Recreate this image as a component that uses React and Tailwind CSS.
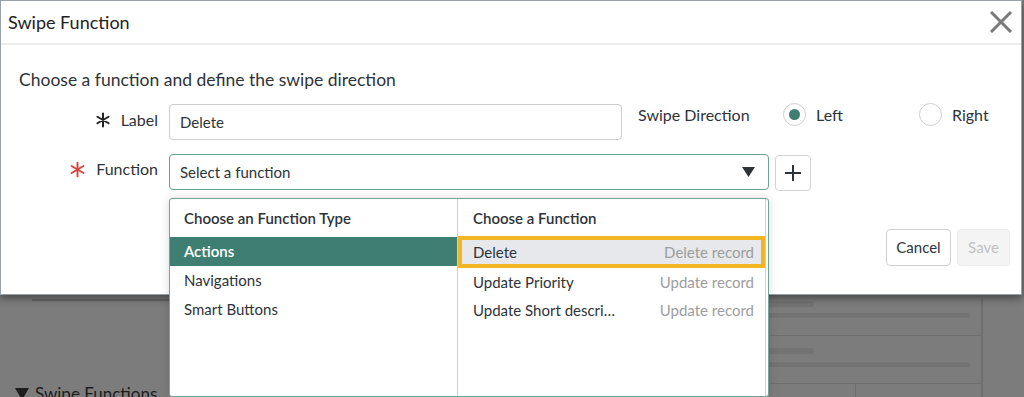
// Swipe Function dialog over a dimmed page

function Asterisk({ color = "#222", size = 15, weight = 1.8 }) {
  return (
    <svg width={size} height={size} viewBox="0 0 16 16" fill="none" stroke={color} strokeWidth={weight} strokeLinecap="round">
      <path d="M8 1.5v13M2.4 4.75l11.2 6.5M2.4 11.25l11.2-6.5" />
    </svg>
  );
}

function Radio({ checked }) {
  return (
    <span className="w-[23px] h-[23px] rounded-full border border-[#cfcfcf] bg-white flex items-center justify-center">
      {checked && <span className="w-[11px] h-[11px] rounded-full bg-[#3f7f71]" />}
    </span>
  );
}

function BackdropPage() {
  return (
    <div className="flex h-full pt-[299px]">
      <div className="w-[480px] flex flex-col">
        <div className="ml-[32px] border-t-2 border-[#666]" />
        <div className="mt-[82px] flex items-center gap-[6px] pl-[15px] text-[17px] leading-[22px] text-[#1d1d1d]">
          <svg width="14" height="12" viewBox="0 0 14 12">
            <path d="M0 0h14L7 12z" fill="#1d1d1d" />
          </svg>
          Swipe Functions
        </div>
      </div>
      <div className="w-[503px] border-r-2 border-[#6e6e6e] flex flex-col">
        <div className="h-[37px] border-b border-[#6e6e6e] pl-[20px] pr-[11px] pt-[2px] flex flex-col gap-[6px]">
          <div className="h-[6px] w-[314px] rounded-full bg-[#737373]" />
          <div className="h-[5px] rounded-full bg-[#737373]" />
        </div>
        <div className="h-[48px] border-b border-[#6e6e6e] pl-[20px] pr-[11px] pt-[12px] flex flex-col gap-[8px]">
          <div className="h-[6px] w-[314px] rounded-full bg-[#737373]" />
          <div className="h-[5px] rounded-full bg-[#737373]" />
        </div>
        <div className="flex-1 flex">
          <div className="w-[376px] border-r border-[#6e6e6e]" />
          <div className="flex-1" />
        </div>
      </div>
    </div>
  );
}

function FunctionDropdown() {
  const types = ["Actions", "Navigations", "Smart Buttons"];
  const fns = [
    { name: "Update Priority", hint: "Update record" },
    { name: "Update Short descri…", hint: "Update record" },
  ];
  return (
    <div className="absolute top-[43px] left-[-1px] w-[600px] h-[199px] bg-white border border-[#76a398] rounded-[3px] shadow-[0_0_10px_rgba(0,0,0,0.15)] flex pr-[2px] text-[15px] text-[#2e3338]">
      <div className="w-[288px] border-r border-[#cfcfcf] flex flex-col">
        <div className="h-[38px] flex items-center px-[14px] font-semibold">Choose an Function Type</div>
        {types.map((t, i) => (
          <div
            key={t}
            className={`h-[29px] flex items-center px-[14px] ${i === 0 ? "bg-[#3f7f71] text-white font-semibold" : ""}`}
          >
            {t}
          </div>
        ))}
      </div>
      <div className="flex-1 border-r border-[#cfcfcf] flex flex-col">
        <div className="h-[37px] flex items-center px-[15px] pt-[2px] font-semibold">Choose a Function</div>
        <div className="h-[32px] flex items-center justify-between border-4 border-[#f2b523] bg-[#e6e8eb] pl-[11px] pr-[7px]">
          <span>Delete</span>
          <span className="text-[#9d9d9d]">Delete record</span>
        </div>
        {fns.map((f) => (
          <div key={f.name} className="h-[28px] flex items-center justify-between pl-[15px] pr-[11px]">
            <span>{f.name}</span>
            <span className="text-[#9d9d9d]">{f.hint}</span>
          </div>
        ))}
      </div>
    </div>
  );
}

function SwipeDialog() {
  return (
    <div className="absolute left-0 top-0 w-[1022px] h-[295px] bg-white border border-[#98a0a8] shadow-[0_3px_8px_rgba(0,0,0,0.45)] text-[#2e3338]">
      <div className="h-[44px] border-b-2 border-[#ececec] flex items-center justify-between pl-[7px] pr-[9px]">
        <span className="text-[18px] text-[#222]">Swipe Function</span>
        <svg width="22" height="22" viewBox="0 0 22 22" stroke="#7a7a7a" strokeWidth="3">
          <path d="M1 1l20 20M21 1L1 21" />
        </svg>
      </div>

      <div className="pl-[18px] pr-[11px] pt-[24px]">
        <div className="text-[17.5px] leading-[22px]">Choose a function and define the swipe direction</div>

        <div className="mt-[13px] flex items-center h-[36px]">
          <div className="w-[150px] flex items-center justify-end gap-[10px] pr-[11px] text-[16px] -mt-[5px]">
            <Asterisk size={16} weight={2} />
            <span>Label</span>
          </div>
          <div className="w-[453px] h-[36px] border border-[#cdcdcd] rounded-[4px] flex items-center px-[10px] text-[15px]">
            Delete
          </div>
          <span className="ml-[16px] w-[145px] text-[16px] -mt-[15px]">Swipe Direction</span>
          <div className="w-[136px] flex items-center gap-[10px] text-[16px] -mt-[15px]">
            <Radio checked />
            <span>Left</span>
          </div>
          <div className="flex items-center gap-[10px] text-[16px] -mt-[15px]">
            <Radio />
            <span>Right</span>
          </div>
        </div>

        <div className="mt-[14px] flex items-start">
          <div className="w-[150px] h-[36px] flex items-center justify-end gap-[10px] pr-[11px] text-[16px] -mt-[3px]">
            <Asterisk color="#d9453b" size={17} />
            <span>Function</span>
          </div>
          <div className="relative w-[600px] h-[36px] border border-[#6d9f92] rounded-[4px] flex items-center justify-between px-[10px] text-[15px]">
            <span>Select a function</span>
            <svg width="13" height="10" viewBox="0 0 13 10" className="mr-[3px]">
              <path d="M0 0h13L6.5 10z" fill="#2e3338" />
            </svg>
            <FunctionDropdown />
          </div>
          <button className="ml-[6px] mt-[1px] w-[36px] h-[36px] border border-[#d3d3d3] rounded-[4px] flex items-center justify-center">
            <svg width="18" height="18" viewBox="0 0 18 18" stroke="#2e3338" strokeWidth="2">
              <path d="M9 1v16M1 9h16" />
            </svg>
          </button>
        </div>

        <div className="mt-[38px] flex justify-end gap-[6px] text-[15px]">
          <button className="w-[65px] h-[37px] border border-[#cfcfcf] rounded-[4px] bg-white text-[#2e3338]">Cancel</button>
          <button className="w-[53px] h-[37px] border border-[#ededed] rounded-[4px] bg-[#f4f4f4] text-[#c2c2c2]">Save</button>
        </div>
      </div>
    </div>
  );
}

export default function App() {
  return (
    <div className="relative w-[1024px] h-[397px] overflow-hidden bg-[#7c7c7c] font-[Lato,sans-serif]">
      <BackdropPage />
      <SwipeDialog />
    </div>
  );
}
